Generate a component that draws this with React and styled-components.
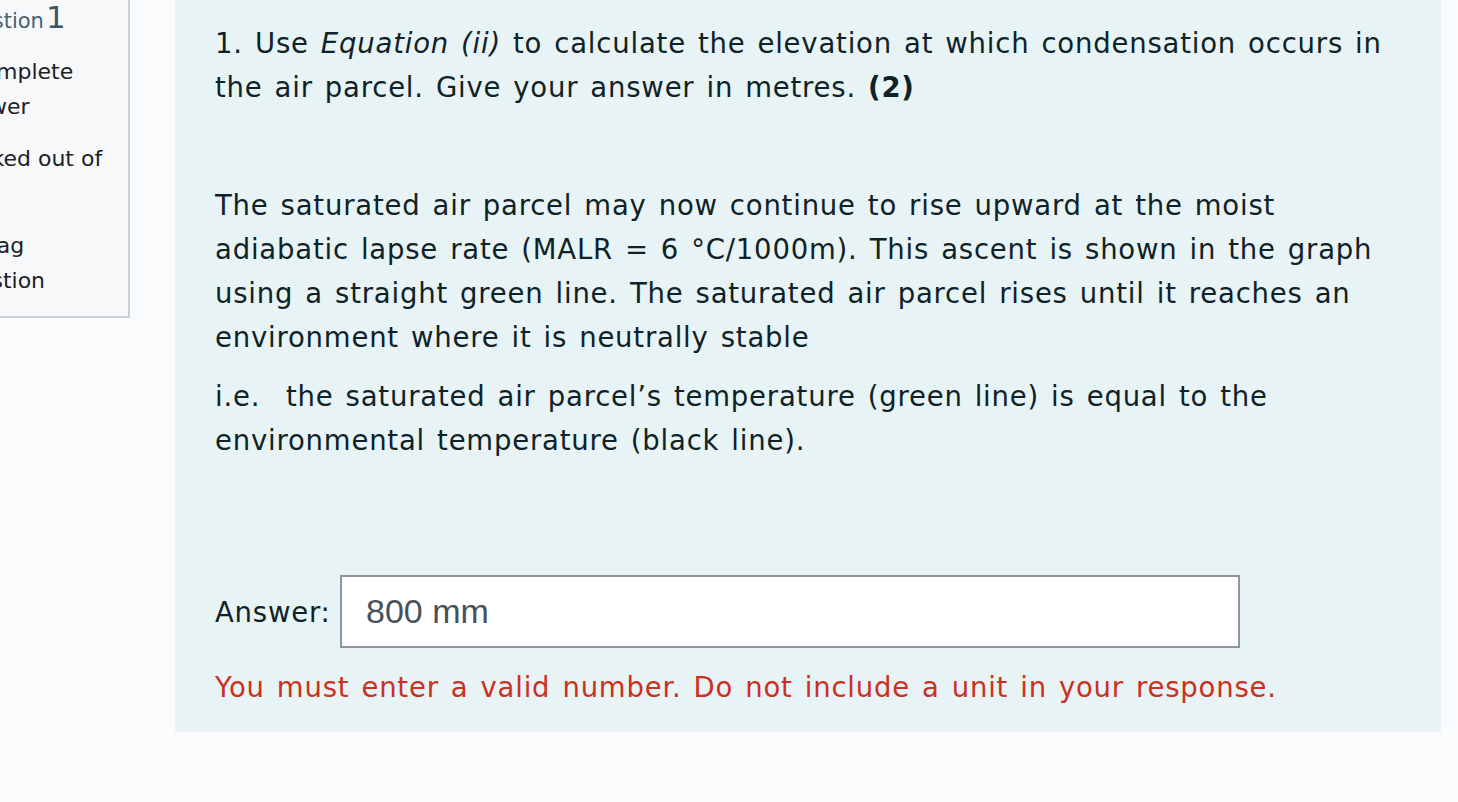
import React from "react";
import styled, { createGlobalStyle } from "styled-components";

const Global = createGlobalStyle`
  html, body { margin: 0; padding: 0; }
  body {
    background: #f9fbfd;
    overflow: hidden;
    font-family: "DejaVu Sans", "Open Sans", sans-serif;
    color: #0f2227;
  }
`;

const Page = styled.div`
  display: flex;
  align-items: flex-start;
  gap: 45px;
  width: 1458px;
  height: 802px;
  overflow: hidden;
`;

const Info = styled.aside`
  flex: 0 0 auto;
  width: 180px;
  margin-left: -50px;
  margin-top: -9px;
  padding: 0 0 18px 0;
  box-sizing: border-box;
  background: #f7f8fa;
  border-right: 2px solid #cbd1d8;
  border-bottom: 2px solid #cbd1d8;
  font-size: 22px;
  line-height: 35px;
  color: #1d2125;
  white-space: nowrap;
`;

const QTitle = styled.h3`
  margin: 0 0 7px;
  font-size: 21px;
  font-weight: 400;
  line-height: 52px;
  color: #4a6170;
`;

const QNo = styled.span`
  font-size: 31px;
  font-weight: 400;
  margin-left: 2px;
  color: #3f5564;
`;

const InfoItem = styled.div`
  margin-bottom: ${(p) => p.$gap ?? 17}px;
`;

const FlagItem = styled(InfoItem)`
  margin-top: 2px;
`;

const FlagIcon = styled.svg`
  width: 20px;
  height: 20px;
  margin-right: 8px;
  vertical-align: -3px;
`;

const Content = styled.main`
  flex: 0 0 auto;
  width: 1266px;
  box-sizing: border-box;
  background: #e7f3f5;
  padding: 21px 40px 23px;
  font-size: 27.5px;
  line-height: 44px;
  letter-spacing: 0.8px;
  word-spacing: 2.5px;
`;

const Para = styled.p`
  margin: 0 0 ${(p) => p.$mb || 0}px;
  white-space: nowrap;
`;

const Num = styled.span`
  display: inline-block;
  width: 40px;
`;

const Em = styled.em`
  font-style: italic;
`;

const Marks = styled.strong`
  font-weight: 700;
`;

const Lead = styled.span`
  display: inline-block;
  width: 71px;
`;

const AnswerRow = styled.div`
  display: flex;
  align-items: center;
  margin-top: 113px;
`;

const Label = styled.label`
  flex: 0 0 125px;
  white-space: nowrap;
`;

const Input = styled.input`
  width: 900px;
  height: 73px;
  box-sizing: border-box;
  border: 2px solid #8f959e;
  background: #fff;
  padding: 0 24px;
  font-family: "Liberation Sans", Arial, sans-serif;
  font-size: 34px;
  color: #495057;
  outline: none;
  border-radius: 0;
`;

const Error = styled.div`
  margin-top: 17px;
  color: #ca3120;
  white-space: nowrap;
`;

export default function App() {
  return (
    <>
      <Global />
      <Page>
        <Info>
          <QTitle>
            Question<QNo>1</QNo>
          </QTitle>
          <InfoItem>
            Incomplete
            <br />
            answer
          </InfoItem>
          <InfoItem>
            Marked out of
            <br />
            2.00
          </InfoItem>
          <FlagItem $gap={0}>
            <FlagIcon viewBox="0 0 20 20" aria-hidden="true">
              <path d="M4 2v17" stroke="#1d2125" strokeWidth="2" fill="none" />
              <path d="M5 3h11l-3 4 3 4H5z" fill="none" stroke="#1d2125" strokeWidth="1.6" />
            </FlagIcon>
            Flag
            <br />
            question
          </FlagItem>
        </Info>
        <Content>
          <Para $mb={74}>
            <Num>1.</Num>Use <Em>Equation (ii)</Em> to calculate the elevation at which condensation occurs in
            <br />
            the air parcel. Give your answer in metres. <Marks>(2)</Marks>
          </Para>
          <Para $mb={15}>
            The saturated air parcel may now continue to rise upward at the moist
            <br />
            adiabatic lapse rate (MALR = 6 °C/1000m). This ascent is shown in the graph
            <br />
            using a straight green line. The saturated air parcel rises until it reaches an
            <br />
            environment where it is neutrally stable
          </Para>
          <Para>
            <Lead>i.e.</Lead>the saturated air parcel’s temperature (green line) is equal to the
            <br />
            environmental temperature (black line).
          </Para>
          <AnswerRow>
            <Label htmlFor="ans">Answer:</Label>
            <Input id="ans" defaultValue="800 mm" />
          </AnswerRow>
          <Error>You must enter a valid number. Do not include a unit in your response.</Error>
        </Content>
      </Page>
    </>
  );
}
